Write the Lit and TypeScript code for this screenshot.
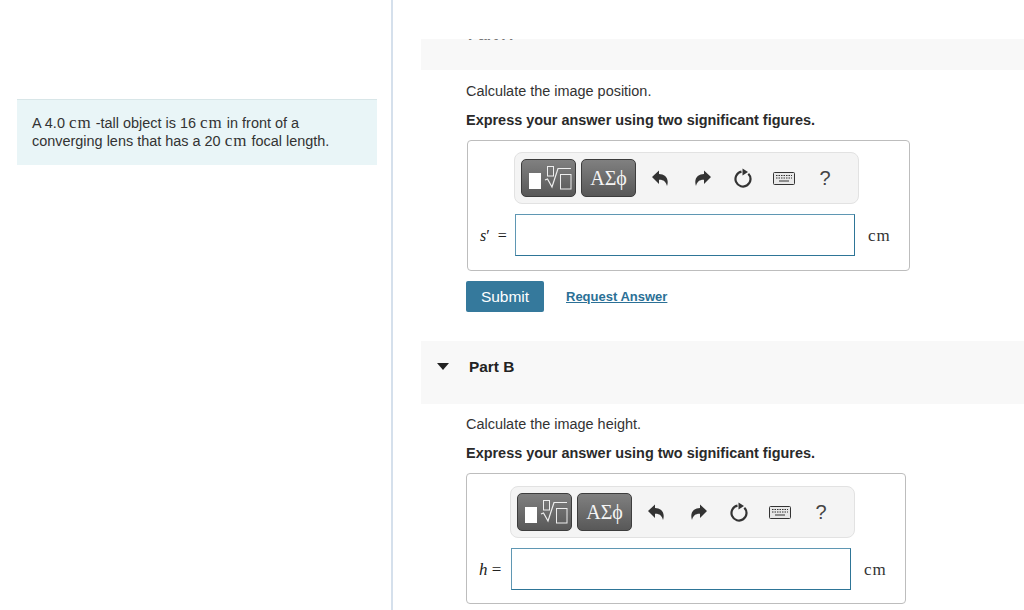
import {LitElement, html, css, svg} from 'lit';
import {customElement, property} from 'lit/decorators.js';

const icons = {
	undo: svg`<path d="M0 7 L7 .5 L7 4 C13 4 17.500 8.500 15 16 C14 11.500 11 9.500 7 9.800 L7 14 Z" fill="#333"/>`,
	redo: svg`<path d="M16 7 L9 .5 L9 4 C3 4 -1.500 8.500 1 16 C2 11.500 5 9.500 9 9.800 L9 14 Z" fill="#333"/>`,
	reset: svg`<path d="M6.500 1.650 A7.500 7.500 0 1 0 13.300 3.700" fill="none" stroke="#333" stroke-width="2.200"/><path d="M7.500 -1.500 L13 2 L7.500 5.500 Z" fill="#333"/>`,
};

@customElement('answer-box')
export class AnswerBox extends LitElement {
	@property() variable = '';
	@property({type: Boolean}) prime = false;

	static styles = css`
		:host {
			display: block;
			box-sizing: border-box;
			height: 131px;
			border: 1px solid #bdbdbd;
			border-radius: 4px;
			background: #fff;
		}
		* {
			box-sizing: border-box;
		}
		.inner {
			display: flex;
			flex-direction: column;
			gap: 10px;
			padding: 11px 0 0 46px;
		}
		:host(.second) .inner {
			padding: 12px 0 0 43px;
		}
		.toolbar {
			display: flex;
			align-items: center;
			width: 345px;
			height: 52px;
			padding-left: 6px;
			background: #f4f4f4;
			border: 1px solid #e2e2e2;
			border-radius: 8px;
		}
		.tmpl {
			display: flex;
			align-items: center;
			justify-content: center;
			width: 55px;
			height: 38px;
			margin-right: 5px;
			border: 1px solid #3d3d3d;
			border-radius: 5px;
			background: linear-gradient(#808080, #585858);
			color: #f4f4f4;
			font: 20px "Liberation Serif", serif;
		}
		.tmpl svg {
			margin: -1px;
		}
		.tools {
			display: grid;
			grid-template-columns: 42px 44px 36px 46px 36px;
			margin-left: -2px;
			justify-items: center;
			align-items: center;
		}
		.help {
			font: 20px "Liberation Sans", sans-serif;
			color: #444;
		}
		.row {
			display: flex;
			align-items: center;
			margin-left: -46px;
		}
		:host(.second) .row {
			margin-left: -43px;
		}
		.label {
			width: 47px;
			padding: 2px 0 0 12px;
			font: 16px "Liberation Serif", serif;
			color: #222;
			white-space: pre;
		}
		:host(.second) .label {
			width: 44px;
			font-size: 17px;
		}
		i {
			font-style: italic;
		}
		.input {
			width: 340px;
			height: 42px;
			border: 1px solid #2e7597;
			border-top-color: #5f97b3;
			border-left-color: #5f97b3;
			background: #fff;
		}
		.unit {
			margin-left: 13px;
			padding-top: 2px;
			font: 17px "Liberation Serif", serif;
			letter-spacing: 1px;
			color: #333;
		}
	`;

	render() {
		return html`
			<div class="inner">
				<div class="toolbar">
					<div class="tmpl">
						<svg width="55" height="38" viewBox="0 0 55 38">
							<rect x="8" y="14" width="12" height="16" fill="#fff"/>
							<rect x="26.500" y="7.500" width="6" height="9.500" fill="none" stroke="#eee"/>
							<path d="M24 21 L26.500 20 L31 28 L37 9.500 L50 9.500" fill="none" stroke="#eee" stroke-width="1.200"/>
							<rect x="39.500" y="15.500" width="10.500" height="14.500" fill="none" stroke="#eee"/>
						</svg>
					</div>
					<div class="tmpl">ΑΣϕ</div>
					<div class="tools">
						<svg width="16" height="17" viewBox="0 0 16 17">${icons.undo}</svg>
						<svg width="16" height="17" viewBox="0 0 16 17">${icons.redo}</svg>
						<svg width="19" height="21" viewBox="0 0 19 21"><g transform="translate(1 2)">${icons.reset}</g></svg>
						<svg width="22" height="13" viewBox="0 0 22 13">
							<rect x=".5" y=".5" width="21" height="12" rx="1" fill="#e8e8e8" stroke="#333"/>
							<path d="M3 3.500 H19 M3 6 H19" stroke="#333" stroke-dasharray="1.500 1"/>
							<path d="M6 9 H16" stroke="#333"/>
						</svg>
						<span class="help">?</span>
					</div>
				</div>
				<div class="row">
					<span class="label"><i>${this.variable}</i>${this.prime ? '′ ' : ''} =</span>
					<div class="input"></div>
					<span class="unit">cm</span>
				</div>
			</div>
		`;
	}
}

@customElement('app-root')
export class AppRoot extends LitElement {
	static styles = css`
		:host {
			display: flex;
			width: 1024px;
			height: 610px;
			overflow: hidden;
			background: #fff;
			font-family: "Liberation Sans", Arial, sans-serif;
			font-size: 14.45px;
			color: #333;
		}
		* {
			box-sizing: border-box;
		}
		.left {
			flex: none;
			width: 393px;
			padding: 99px 14px 0 17px;
			border-right: 2px solid #d5e0ec;
		}
		.intro {
			height: 66px;
			padding: 14px 15px 0;
			background: #e9f5f7;
			border-top: 1px solid #d8e6e8;
			line-height: 18px;
		}
		.cm {
			font-family: "Liberation Serif", serif;
			font-size: 17px;
			line-height: 0;
			letter-spacing: 1px;
		}
		.right {
			flex: 1;
			padding: 39px 0 0 28px;
			min-width: 0;
		}
		.part {
			display: flex;
			background: #f8f8f8;
			overflow: hidden;
			font-size: 15.4px;
			font-weight: bold;
			color: #222;
		}
		.part.a {
			height: 31px;
			padding-left: 47px;
			line-height: 1;
		}
		.part.a span {
			margin-top: -12px;
			color: #777;
		}
		.part.b {
			align-items: center;
			height: 63px;
			margin-top: 29px;
			padding: 0 0 12px 16px;
		}
		.caret {
			width: 0;
			height: 0;
			margin-right: 20px;
			border-left: 6px solid transparent;
			border-right: 6px solid transparent;
			border-top: 7px solid #222;
		}
		.body {
			padding-left: 45px;
		}
		p {
			margin: 0;
			line-height: 18px;
		}
		.q1 {
			padding-top: 12px;
		}
		.q2 {
			padding-top: 11px;
		}
		.hint {
			margin-top: 11px;
			font-weight: bold;
			color: #2a2a2a;
		}
		answer-box {
			width: 443px;
			margin: 11px 0 0 1px;
		}
		answer-box.second {
			width: 440px;
			margin-left: 0;
		}
		.actions {
			display: flex;
			align-items: center;
			gap: 22px;
			margin-top: 10px;
		}
		.submit {
			width: 78px;
			height: 31px;
			border: none;
			border-radius: 2px;
			background: #35799c;
			color: #fff;
			font: 15.5px "Liberation Sans", sans-serif;
		}
		a {
			color: #2b7096;
			font-size: 13px;
			font-weight: bold;
			text-decoration: underline;
		}
	`;

	render() {
		return html`
			<div class="left">
				<div class="intro">
					A 4.0 <span class="cm">cm</span> -tall object is 16 <span class="cm">cm</span> in front of a<br>
					converging lens that has a 20 <span class="cm">cm</span> focal length.
				</div>
			</div>
			<div class="right">
				<div class="part a"><span>Part A</span></div>
				<div class="body">
					<p class="q1">Calculate the image position.</p>
					<p class="hint">Express your answer using two significant figures.</p>
					<answer-box variable="s" prime></answer-box>
					<div class="actions">
						<button class="submit">Submit</button>
						<a href="#">Request Answer</a>
					</div>
				</div>
				<div class="part b"><span class="caret"></span><span>Part B</span></div>
				<div class="body">
					<p class="q2">Calculate the image height.</p>
					<p class="hint">Express your answer using two significant figures.</p>
					<answer-box class="second" variable="h"></answer-box>
				</div>
			</div>
		`;
	}
}
